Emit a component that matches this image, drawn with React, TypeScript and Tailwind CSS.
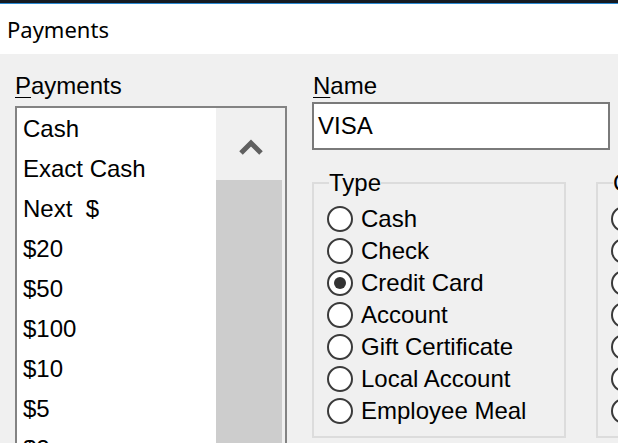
import React from "react";

const items = ["Cash", "Exact Cash", "Next  $", "$20", "$50", "$100", "$10", "$5", "$2"];
const types = ["Cash", "Check", "Credit Card", "Account", "Gift Certificate", "Local Account", "Employee Meal"];
const others = ["Visa", "MasterCard", "Amex", "Discover", "Diners", "JCB", "Other"];

function Radio({ checked, label }: { checked?: boolean; label: string }) {
  return (
    <div className="flex items-center h-[32px] whitespace-nowrap">
      <div className="w-[26px] h-[26px] shrink-0 rounded-full border-2 border-[#3a3a3a] bg-white flex items-center justify-center">
        {checked && <div className="w-[12px] h-[12px] rounded-full bg-[#333333]" />}
      </div>
      <span className="ml-[8px] leading-[32px]">{label}</span>
    </div>
  );
}

export default function App() {
  return (
    <div
      className="w-[618px] h-[443px] overflow-hidden bg-[#f0f0f0] text-black flex flex-col"
      style={{ fontFamily: '"Liberation Sans", Arial, sans-serif' }}
    >
      <div className="h-[3px] bg-[#161b22] shrink-0" />
      <div className="h-[1px] bg-[#2a8ad4] shrink-0" />
      <div
        className="h-[50px] bg-white shrink-0 pt-[10px] pl-[7px] text-[22px] leading-[30px]"
        style={{ fontFamily: '"Noto Sans", "Open Sans", sans-serif' }}
      >
        Payments
      </div>
      <div className="flex flex-1 min-h-0 pt-[19px] pl-[15px] text-[24px]">
        <div className="w-[272px] shrink-0 flex flex-col">
          <div className="h-[26px] leading-[26px]">
            <span className="underline underline-offset-[3px] decoration-1">P</span>ayments
          </div>
          <div className="mt-[7px] h-[400px] border-2 border-[#838383] flex shrink-0">
            <div className="w-[199px] bg-white pt-px pl-[6px]">
              {items.map((it) => (
                <div key={it} className="h-[40px] leading-[40px] whitespace-pre">
                  {it}
                </div>
              ))}
            </div>
            <div className="flex-1 bg-[#f0f0f0] flex flex-col">
              <div className="h-[72px] flex items-center justify-center pt-[5px]">
                <svg width="24" height="18" viewBox="0 0 24 18">
                  <polyline points="2,15 12,5 22,15" fill="none" stroke="#606060" strokeWidth="5" />
                </svg>
              </div>
              <div className="flex-1 bg-[#cdcdcd] mr-[3px]" />
            </div>
          </div>
        </div>
        <div className="ml-[25px] flex flex-col shrink-0">
          <div className="h-[26px] leading-[26px] ml-px">
            <span className="underline underline-offset-[3px] decoration-1">N</span>ame
          </div>
          <div className="mt-[3px] w-[298px] h-[48px] border-2 border-[#7a7a7a] bg-white pl-[4px] leading-[44px]">
            VISA
          </div>
          <div className="flex mt-[20px]">
            <fieldset className="w-[254px] shrink-0 border-2 border-[#dcdcdc] px-[13px] pb-[9px]">
              <legend className="ml-[2px] h-[26px] leading-[26px]">Type</legend>
              <div className="mt-[7px]">
                {types.map((t) => (
                  <Radio key={t} label={t} checked={t === "Credit Card"} />
                ))}
              </div>
            </fieldset>
            <fieldset className="ml-[30px] w-[254px] shrink-0 border-2 border-[#dcdcdc] px-[13px] pb-[9px]">
              <legend className="ml-[2px] h-[26px] leading-[26px]">Card Type</legend>
              <div className="mt-[7px]">
                {others.map((t) => (
                  <Radio key={t} label={t} />
                ))}
              </div>
            </fieldset>
          </div>
        </div>
      </div>
    </div>
  );
}
